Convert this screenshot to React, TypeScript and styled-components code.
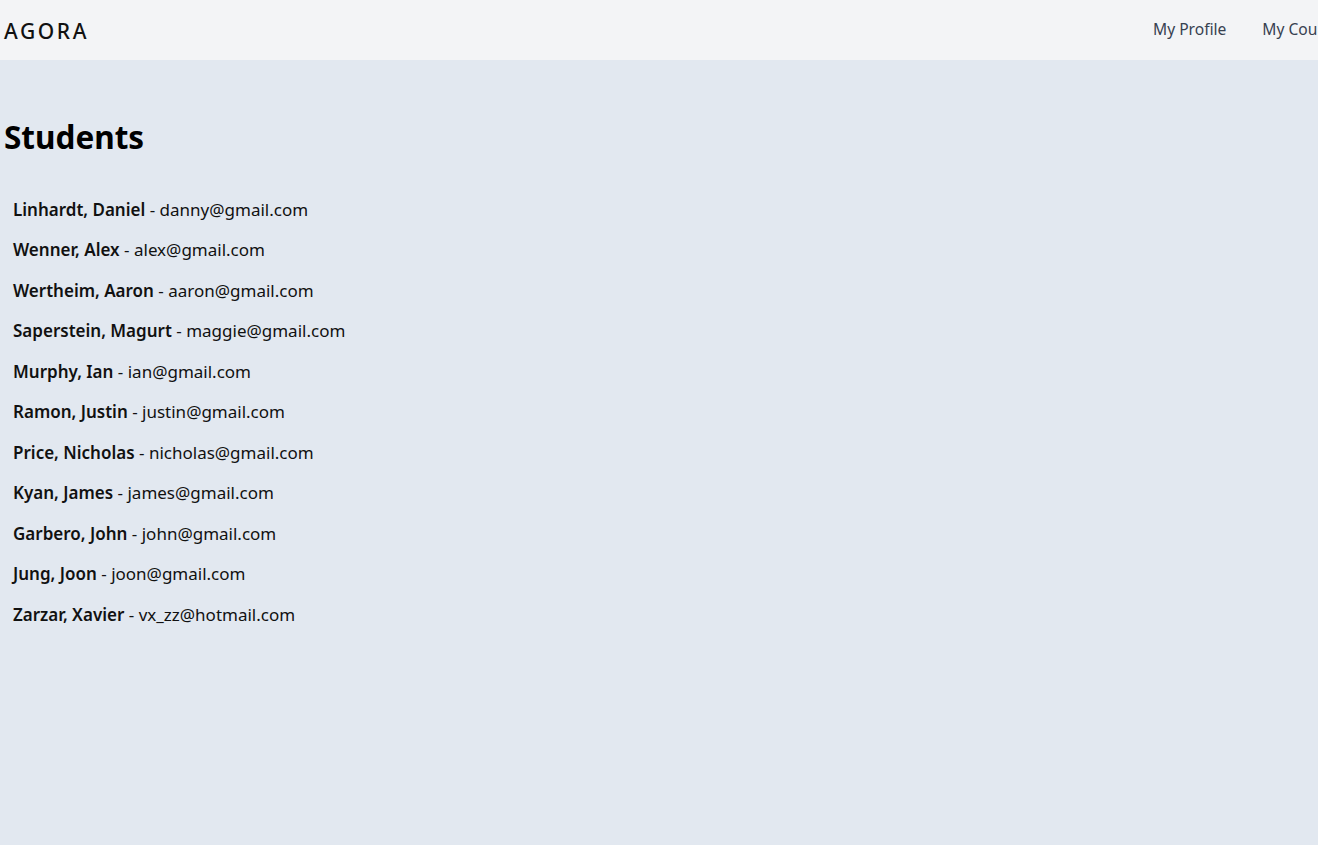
import React from "react";
import styled, { createGlobalStyle } from "styled-components";

const GlobalStyle = createGlobalStyle`
  html, body {
    margin: 0;
    padding: 0;
    background: #e2e8f0;
    overflow-x: hidden;
  }
  body {
    font-family: "Noto Sans", "Open Sans", Arial, sans-serif;
    color: #111827;
  }
  * { box-sizing: border-box; }
`;

const Page = styled.div`
  min-height: 845px;
  background: #e2e8f0;
  display: flex;
  flex-direction: column;
`;

const Header = styled.header`
  height: 60px;
  background: #f3f4f6;
  display: grid;
  grid-template-columns: 1149px auto;
  align-items: center;
  padding-left: 4px;
  width: 1440px;
`;

const Logo = styled.div`
  font-size: 21px;
  font-weight: 500;
  letter-spacing: 2.6px;
  color: #111111;
  margin-top: 2px;
`;

const Nav = styled.nav`
  display: flex;
  gap: 36px;
  margin-bottom: 2px;
  white-space: nowrap;
`;

const NavLink = styled.a`
  font-size: 15.6px;
  color: #374151;
  text-decoration: none;
  cursor: pointer;
`;

const Main = styled.main`
  padding: 57px 4px 0;
`;

const Title = styled.h1`
  margin: 0 0 33px;
  font-size: 31.5px;
  font-weight: 700;
  line-height: 40px;
  color: #000;
`;

const List = styled.ul`
  list-style: none;
  margin: 0;
  padding: 0 0 0 9px;
`;

const Row = styled.li`
  font-size: 17px;
  line-height: 28.45px;
  padding: 6px 0;
  color: #111;
`;

const Name = styled.span`
  font-weight: 600;
`;

const students = [
  ["Linhardt, Daniel", "danny@gmail.com"],
  ["Wenner, Alex", "alex@gmail.com"],
  ["Wertheim, Aaron", "aaron@gmail.com"],
  ["Saperstein, Magurt", "maggie@gmail.com"],
  ["Murphy, Ian", "ian@gmail.com"],
  ["Ramon, Justin", "justin@gmail.com"],
  ["Price, Nicholas", "nicholas@gmail.com"],
  ["Kyan, James", "james@gmail.com"],
  ["Garbero, John", "john@gmail.com"],
  ["Jung, Joon", "joon@gmail.com"],
  ["Zarzar, Xavier", "vx_zz@hotmail.com"],
];

export default function App() {
  return (
    <Page>
      <GlobalStyle />
      <Header>
        <Logo>AGORA</Logo>
        <Nav>
          <NavLink>My Profile</NavLink>
          <NavLink>My Courses</NavLink>
        </Nav>
      </Header>
      <Main>
        <Title>Students</Title>
        <List>
          {students.map(([name, email]) => (
            <Row key={email}>
              <Name>{name}</Name> - {email}
            </Row>
          ))}
        </List>
      </Main>
    </Page>
  );
}
